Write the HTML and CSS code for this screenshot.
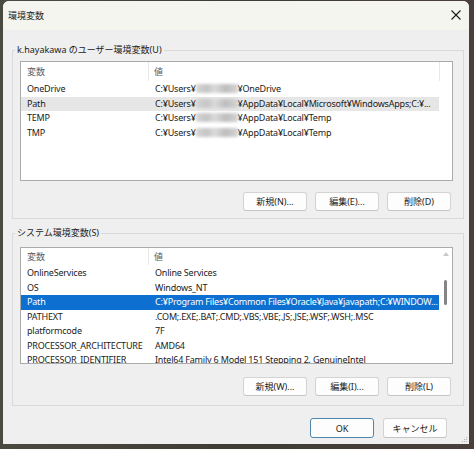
FILE: index.html
```html
<!DOCTYPE html>
<html lang="ja">
<head>
<meta charset="utf-8">
<title>環境変数</title>
<link rel="stylesheet" href="styles.css">
</head>
<body>
<div class="window">
  <div class="titlebar">
    <span class="title">環境変数</span>
    <svg class="close" width="10" height="10" viewBox="0 0 10 10"><path d="M0.5 0.5 L9.5 9.5 M9.5 0.5 L0.5 9.5" stroke="#1a1a1a" stroke-width="1.1" fill="none"/></svg>
  </div>
  <div class="content">
    <fieldset class="group group-user">
      <legend>k.hayakawa のユーザー環境変数(U)</legend>
      <div class="list list-user">
        <div class="rows">
          <div class="row header"><div class="c1">変数</div><div class="c2">値</div></div>
          <div class="row"><div class="c1">OneDrive</div><div class="c2">C:¥Users¥<span class="blur"></span>¥OneDrive</div></div>
          <div class="row hover"><div class="c1">Path</div><div class="c2">C:¥Users¥<span class="blur"></span>¥AppData¥Local¥Microsoft¥WindowsApps;C:¥...</div></div>
          <div class="row"><div class="c1">TEMP</div><div class="c2">C:¥Users¥<span class="blur"></span>¥AppData¥Local¥Temp</div></div>
          <div class="row"><div class="c1">TMP</div><div class="c2">C:¥Users¥<span class="blur"></span>¥AppData¥Local¥Temp</div></div>
        </div>
        <div class="sidebar"><div class="hdr-end"></div></div>
      </div>
      <div class="buttons">
        <button class="btn">新規(N)...</button>
        <button class="btn">編集(E)...</button>
        <button class="btn">削除(D)</button>
      </div>
    </fieldset>
    <fieldset class="group group-system">
      <legend>システム環境変数(S)</legend>
      <div class="list list-system">
        <div class="rows">
          <div class="row header"><div class="c1">変数</div><div class="c2">値</div></div>
          <div class="row"><div class="c1">OnlineServices</div><div class="c2">Online Services</div></div>
          <div class="row"><div class="c1">OS</div><div class="c2">Windows_NT</div></div>
          <div class="row selected"><div class="c1">Path</div><div class="c2">C:¥Program Files¥Common Files¥Oracle¥Java¥javapath;C:¥WINDOW...</div></div>
          <div class="row"><div class="c1">PATHEXT</div><div class="c2">.COM;.EXE;.BAT;.CMD;.VBS;.VBE;.JS;.JSE;.WSF;.WSH;.MSC</div></div>
          <div class="row"><div class="c1">platformcode</div><div class="c2">7F</div></div>
          <div class="row"><div class="c1">PROCESSOR_ARCHITECTURE</div><div class="c2">AMD64</div></div>
          <div class="row"><div class="c1">PROCESSOR_IDENTIFIER</div><div class="c2">Intel64 Family 6 Model 151 Stepping 2, GenuineIntel</div></div>
        </div>
        <div class="sidebar scroll">
          <svg class="arrow" width="6" height="4" viewBox="0 0 6 4"><path d="M0 4 L3 0 L6 4 Z" fill="#c9c9c9"/></svg>
          <div class="thumb"></div>
        </div>
      </div>
      <div class="buttons">
        <button class="btn">新規(W)...</button>
        <button class="btn">編集(I)...</button>
        <button class="btn">削除(L)</button>
      </div>
    </fieldset>
    <div class="dialog-buttons">
      <button class="btn btn-default">OK</button>
      <button class="btn">キャンセル</button>
    </div>
  </div>
  <svg class="grip" width="6" height="6" viewBox="0 0 6 6"><g fill="#b0b0b0"><rect x="4" y="0" width="1" height="1"/><rect x="2" y="2" width="1" height="1"/><rect x="4" y="2" width="1" height="1"/><rect x="0" y="4" width="1" height="1"/><rect x="2" y="4" width="1" height="1"/><rect x="4" y="4" width="1" height="1"/></g></svg>
</div>
</body>
</html>
```

FILE: styles.css
```css
* { box-sizing: border-box; }

html, body {
  margin: 0;
  padding: 0;
}

body {
  width: 474px;
  height: 449px;
  overflow: hidden;
  background: linear-gradient(90deg, #4b4a40 0%, #3e3c35 50%, #4a3f3c 100%);
  font-family: "Noto Sans", "Noto Sans CJK JP", sans-serif;
  font-size: 9px;
  color: #1b1b1b;
}

.window {
  position: relative;
  margin: 1px 5px 0 3px;
  width: 466px;
  height: 443px;
  background: #efefef;
  border-radius: 6px 6px 0 0;
  overflow: hidden;
  display: flex;
  flex-direction: column;
}

.titlebar {
  height: 29px;
  flex: none;
  background: #f5f5ef;
  display: flex;
  align-items: center;
  justify-content: space-between;
  padding: 0 8px 1px 5px;
}

.title {
  font-size: 9px;
  color: #1a1a1a;
}

.close { display: block; }

.content {
  padding: 12px 5px 0 9px;
  display: flex;
  flex-direction: column;
}

.group {
  margin: 0;
  padding: 0 10px 7px 7px;
  border: 1px solid #d9d9d9;
  min-width: 0;
}

.group legend {
  padding: 0 2px;
  margin-left: -5px;
  line-height: 16px;
  font-size: 9px;
  color: #1b1b1b;
}

.group-system {
  margin-top: 6px;
  padding-bottom: 9px;
}

.list {
  background: #ffffff;
  border: 1px solid #ababab;
  display: flex;
  overflow: hidden;
}

.list-user {
  margin-top: 3px;
  height: 120px;
}

.list-system {
  margin-top: 6px;
  height: 117px;
}

.rows {
  width: 418px;
  flex: none;
}

.row {
  display: grid;
  grid-template-columns: 128px 290px;
  height: 14.5px;
  line-height: 14.5px;
  white-space: nowrap;
  letter-spacing: -0.2px;
}

.row > div {
  padding-left: 6px;
  overflow: hidden;
}

.row.header {
  height: 20px;
  line-height: 19px;
  color: #5a5a5a;
  letter-spacing: 0;
}

.list-system .row.header {
  height: 18px;
  line-height: 17px;
}

.row.header .c1 {
  border-right: 1px solid #e8e8e8;
  margin-bottom: 1px;
}

.row.header .c2 { padding-left: 5px; }

.row.hover { background: #e6e6e6; }

.row.selected {
  background: #0d6fd0;
  color: #ffffff;
}

.blur {
  display: inline-block;
  width: 42px;
  height: 9px;
  vertical-align: -1px;
  background: linear-gradient(90deg, #d6d6d6 0%, #c4c4c4 25%, #dadada 45%, #bdbdbd 70%, #d4d4d4 100%);
  filter: blur(1.4px);
}

.sidebar {
  flex: 1;
  display: flex;
  flex-direction: column;
  align-items: center;
}

.list-user .sidebar { align-items: flex-start; }

.hdr-end {
  width: 1px;
  height: 19px;
  background: #e8e8e8;
}

.scroll .arrow {
  margin-top: 4px;
  display: block;
}

.scroll .thumb {
  margin-top: 24px;
  width: 3px;
  height: 25px;
  border-radius: 2px;
  background: #858585;
}

.buttons {
  display: flex;
  justify-content: flex-end;
  gap: 8px;
  padding-right: 2px;
  margin-top: 11px;
}

.group-system .buttons { margin-top: 13px; }

.btn {
  width: 64px;
  height: 19px;
  padding: 0;
  margin: 0;
  background: #fdfdfd;
  border: 1px solid #d3d3d3;
  border-bottom-color: #c4c4c4;
  border-radius: 3px;
  font-family: "Noto Sans", "Noto Sans CJK JP", sans-serif;
  font-size: 9px;
  color: #1b1b1b;
  line-height: 17px;
}

.dialog-buttons {
  display: flex;
  justify-content: flex-end;
  gap: 9px;
  margin-top: 12px;
  padding-right: 17px;
}

.dialog-buttons .btn {
  width: 64px;
  height: 20px;
}

.btn-default {
  border: 1px solid #4e86ad;
  box-shadow: inset 0 0 0 1px #ffffff;
}

.grip {
  position: absolute;
  right: 1px;
  bottom: 1px;
}
```
